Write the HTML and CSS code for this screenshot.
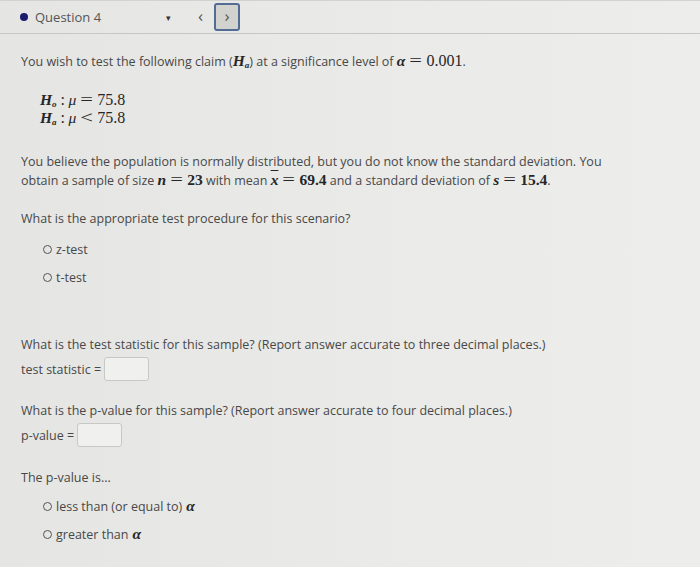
FILE: index.html
```html
<!DOCTYPE html>
<html>
<head>
<meta charset="utf-8">
<link rel="stylesheet" href="styles.css">
</head>
<body>
<div class="page">
  <header class="topbar">
    <span class="dot"></span>
    <span class="qtitle">Question 4</span>
    <span class="caret">&#9662;</span>
    <span class="prev">&lsaquo;</span>
    <span class="next">&rsaquo;</span>
  </header>
  <main class="content">
    <p class="first">You wish to test the following claim (<span class="m b">H<sub>a</sub></span>) at a significance level of <span class="m b">α</span><span class="mn op">=</span><span class="mn">0.001</span>.</p>
    <div class="hyp">
      <div class="hl"><span class="m b">H<sub>o</sub></span><span class="mn op colon">:</span><span class="m">μ</span><span class="mn op">=</span><span class="mn">75.8</span></div>
      <div class="hl"><span class="m b">H<sub>a</sub></span><span class="mn op colon">:</span><span class="m">μ</span><span class="mn op">&lt;</span><span class="mn">75.8</span></div>
    </div>
    <p class="para">You believe the population is normally distributed, but you do not know the standard deviation. You obtain a sample of size <span class="m b">n</span><span class="mn op">=</span><span class="mn b pn">23</span> with mean <span class="m b over">x</span><span class="mn op">=</span><span class="mn b pn">69.4</span> and a standard deviation of <span class="m b">s</span><span class="mn op">=</span><span class="mn b pn">15.4</span>.</p>
    <p class="q q1">What is the appropriate test procedure for this scenario?</p>
    <div class="opts opts1">
      <label class="opt"><span class="radio"></span>z-test</label>
      <label class="opt"><span class="radio"></span>t-test</label>
    </div>
    <p class="q q2">What is the test statistic for this sample? (Report answer accurate to three decimal places.)</p>
    <div class="ans"><span class="lbl">test statistic =</span><span class="box box1"></span></div>
    <p class="q q3">What is the p-value for this sample? (Report answer accurate to four decimal places.)</p>
    <div class="ans"><span class="lbl">p-value =</span><span class="box box2"></span></div>
    <p class="q q4">The p-value is...</p>
    <div class="opts opts2">
      <label class="opt"><span class="radio"></span>less than (or equal to)<span class="m b alpha">α</span></label>
      <label class="opt"><span class="radio"></span>greater than<span class="m b alpha">α</span></label>
    </div>
  </main>
</div>
</body>
</html>
```
FILE: styles.css
```css
html, body {
  margin: 0;
  padding: 0;
}
body {
  width: 700px;
  height: 567px;
  overflow: hidden;
  background: #e8e8e6;
  font-family: "Open Sans", "Liberation Sans", sans-serif;
  font-size: 12.5px;
  color: #484848;
}
.page {
  width: 700px;
  height: 567px;
  background: linear-gradient(90deg, #e5e5e3 0%, #eaeae8 55%, #ededec 100%);
}
.topbar {
  height: 34px;
  border-top: 1px solid #d2d2d0;
  border-bottom: 1px solid #c6c6c4;
  display: flex;
  align-items: center;
  box-sizing: border-box;
  padding-left: 20px;
}
.dot {
  width: 8px;
  height: 8px;
  border-radius: 50%;
  background: #1c1c6e;
  margin-right: 7px;
}
.qtitle {
  font-size: 13px;
  color: #555;
  width: 131px;
}
.caret {
  font-size: 9px;
  color: #333;
  width: 32px;
}
.prev {
  font-size: 17px;
  color: #555;
  width: 16px;
  line-height: 1;
  margin-top: -3px;
}
.next {
  width: 22px;
  height: 24px;
  border: 2px solid #536c94;
  border-radius: 3px;
  background: #d2d2cf;
  color: #555;
  font-size: 17px;
  line-height: 21px;
  text-align: center;
}
.content {
  padding-left: 21px;
}
p {
  margin: 0;
}
.m {
  font-family: "Liberation Serif", "DejaVu Serif", serif;
  font-style: italic;
  font-size: 15.5px;
  color: #262626;
  line-height: 1;
}
.b {
  font-weight: bold;
}
.mn {
  font-family: "Liberation Serif", "DejaVu Serif", serif;
  color: #262626;
  font-size: 16px;
  line-height: 1;
}
.pn {
  font-size: 15.5px;
}
.op {
  display: inline-block;
  width: 11px;
  text-align: center;
  margin: 0 5px;
  transform: scaleX(1.4);
}
.op.colon {
  width: 4px;
  margin: 0 4px;
  transform: none;
}
sub {
  font-size: 9px;
  vertical-align: -2px;
  line-height: 1;
}
.over {
  text-decoration: overline;
}
.first {
  margin-top: 19px;
  line-height: 18px;
}
.hyp {
  margin-top: 21px;
  margin-left: 19px;
}
.hl {
  height: 18px;
  line-height: 18px;
}
.para {
  margin-top: 24px;
  line-height: 19px;
  width: 600px;
}
.q {
  line-height: 18px;
}
.q1 {
  margin-top: 20px;
}
.opts {
  margin-left: 22px;
}
.opts1 {
  margin-top: 7px;
}
.opts2 {
  margin-top: 5px;
}
.opt {
  display: flex;
  align-items: center;
  height: 28px;
}
.radio {
  width: 7px;
  height: 7px;
  border: 1.5px solid #555;
  border-radius: 50%;
  margin-right: 4px;
}
.alpha {
  margin-left: 4px;
}
.q2 {
  margin-top: 45px;
}
.q3 {
  margin-top: 21px;
}
.q4 {
  margin-top: 22px;
}
.ans {
  display: flex;
  align-items: center;
  margin-top: 3px;
  height: 24px;
}
.lbl {
  margin-right: 3px;
}
.box {
  height: 22px;
  border: 1px solid #c7c7c5;
  background: #f0f0ef;
  border-radius: 3px;
}
.box1 {
  width: 43px;
}
.box2 {
  width: 43px;
}
```
